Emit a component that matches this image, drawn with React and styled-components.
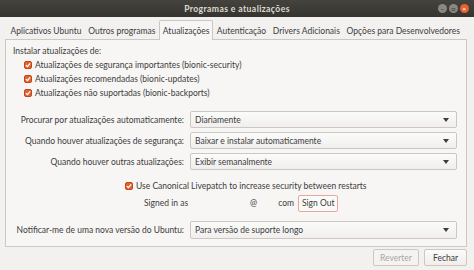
import React from "react";
import styled, { createGlobalStyle } from "styled-components";

const Global = createGlobalStyle`
  html, body { margin: 0; padding: 0; background: #f2f1f0; }
  body { width: 474px; height: 270px; overflow: hidden; }
  * { box-sizing: border-box; }
`;

const Window = styled.div`
  width: 474px;
  height: 270px;
  display: flex;
  flex-direction: column;
  background: #f2f1f0;
  color: #3c3c3c;
  font-family: Lato, "Open Sans", sans-serif;
  font-size: 8.5px;
`;

const TitleBar = styled.div`
  height: 17px;
  flex: none;
  position: relative;
  display: flex;
  align-items: center;
  justify-content: center;
  background: linear-gradient(#45433e, #36342f);
  color: #dfdbd2;
  font-weight: 700;
  font-size: 8.6px;
  letter-spacing: 0.4px;
`;

const WinButtons = styled.div`
  position: absolute;
  right: 5px;
  top: 4px;
  display: flex;
  gap: 2px;
`;

const WinDot = styled.span`
  width: 9px;
  height: 9px;
  border-radius: 50%;
  background: ${(p) => p.$bg};
  display: flex;
  align-items: center;
  justify-content: center;
  color: ${(p) => p.$fg || "#3a3833"};
  font-size: 6px;
  line-height: 1;
`;

const Body = styled.div`
  flex: 1;
  display: flex;
  flex-direction: column;
  padding: 2px 7px 4px 5px;
`;

const TabBar = styled.div`
  display: flex;
  align-items: flex-end;
  height: 20px;
  padding-left: 2px;
`;

const Tab = styled.div`
  height: ${(p) => (p.$active ? "20px" : "18px")};
  padding: 0 ${(p) => p.$pad}px;
  display: flex;
  align-items: center;
  white-space: nowrap;
  border: 1px solid ${(p) => (p.$active ? "#cdc7c2" : "transparent")};
  border-bottom: none;
  background: ${(p) => (p.$active ? "#f7f6f5" : "transparent")};
  border-radius: 2px 2px 0 0;
  margin-bottom: ${(p) => (p.$active ? "-1px" : "0")};
  position: relative;
  z-index: 1;
`;

const Panel = styled.div`
  flex: 1;
  border: 1px solid #cdc7c2;
  background: #f7f6f5;
  padding: 4px 9px 0 7px;
  display: flex;
  flex-direction: column;
`;

const SectionTitle = styled.div`
  height: 13px;
  display: flex;
  align-items: center;
`;

const CheckList = styled.div`
  display: flex;
  flex-direction: column;
  padding-left: 11px;
  margin-top: 1px;
`;

const CheckRow = styled.div`
  height: 14px;
  display: flex;
  align-items: center;
  gap: 3px;
`;

const Box = styled.span`
  width: 8px;
  height: 8px;
  border-radius: 2px;
  background: #e2632f;
  border: 1px solid #c2461b;
  display: inline-flex;
  align-items: center;
  justify-content: center;
  flex: none;
`;

const Grid = styled.div`
  display: grid;
  grid-template-columns: 171px 1fr;
  column-gap: 6px;
  row-gap: 4px;
  align-items: center;
  margin-top: ${(p) => p.$mt}px;
`;

const Label = styled.div`
  text-align: right;
  white-space: nowrap;
`;

const Combo = styled.div`
  height: ${(p) => p.$h || 17}px;
  border: 1px solid #cdc7c2;
  border-radius: 2px;
  background: linear-gradient(#fbfbfa, #f0efee);
  display: flex;
  align-items: center;
  justify-content: space-between;
  padding: 0 7px 0 4px;
`;

const Arrow = styled.span`
  width: 0;
  height: 0;
  border-left: 3px solid transparent;
  border-right: 3px solid transparent;
  border-top: 4px solid #3c3c3c;
`;

const Livepatch = styled.div`
  margin-top: 9px;
  padding-left: 112px;
`;

const SignedRow = styled.div`
  display: flex;
  align-items: center;
  height: 18px;
  margin-top: 1px;
  padding-left: 131px;
`;

const Part = styled.span`
  margin-left: ${(p) => p.$ml || 0}px;
`;

const SignOut = styled.div`
  height: 17px;
  margin-left: 4px;
  padding: 0 3px;
  border: 1px solid #e8a99b;
  border-radius: 2px;
  background: #fbfaf9;
  display: flex;
  align-items: center;
`;

const Footer = styled.div`
  display: flex;
  justify-content: flex-end;
  gap: 5px;
  margin-top: 2px;
`;

const Button = styled.div`
  height: 17px;
  min-width: ${(p) => p.$w}px;
  border: 1px solid #cdc7c2;
  border-radius: 2px;
  background: ${(p) => (p.$disabled ? "#f4f3f2" : "linear-gradient(#fbfbfa, #efeeed)")};
  color: ${(p) => (p.$disabled ? "#a8a7a4" : "#3c3c3c")};
  display: flex;
  align-items: center;
  justify-content: center;
`;

const Check = () => (
  <Box>
    <svg width="6" height="6" viewBox="0 0 6 6">
      <path d="M0.8 3.1 L2.4 4.6 L5.2 1.3" stroke="#fff" strokeWidth="1.3" fill="none" />
    </svg>
  </Box>
);

const tabs = [
  "Aplicativos Ubuntu",
  "Outros programas",
  "Atualizações",
  "Autenticação",
  "Drivers Adicionais",
  "Opções para Desenvolvedores",
];

const combos = [
  ["Procurar por atualizações automaticamente:", "Diariamente"],
  ["Quando houver atualizações de segurança:", "Baixar e instalar automaticamente"],
  ["Quando houver outras atualizações:", "Exibir semanalmente"],
];

export default function App() {
  return (
    <Window>
      <Global />
      <TitleBar>
        Programas e atualizações
        <WinButtons>
          <WinDot $bg="#8a8883">–</WinDot>
          <WinDot $bg="#8a8883">□</WinDot>
          <WinDot $bg="#e9602f" $fg="#fff">×</WinDot>
        </WinButtons>
      </TitleBar>
      <Body>
        <TabBar>
          {tabs.map((t) => {
            const active = t === "Atualizações";
            return (
              <Tab key={t} $active={active} $pad={active ? 3 : 2.4}>{t}</Tab>
            );
          })}
        </TabBar>
        <Panel>
          <SectionTitle>Instalar atualizações de:</SectionTitle>
          <CheckList>
            <CheckRow><Check />Atualizações de segurança importantes (bionic-security)</CheckRow>
            <CheckRow><Check />Atualizações recomendadas (bionic-updates)</CheckRow>
            <CheckRow><Check />Atualizações não suportadas (bionic-backports)</CheckRow>
          </CheckList>
          <Grid $mt={11}>
            {combos.map(([l, v]) => (
              <React.Fragment key={l}>
                <Label>{l}</Label>
                <Combo>{v}<Arrow /></Combo>
              </React.Fragment>
            ))}
          </Grid>
          <Livepatch>
            <CheckRow><Check />Use Canonical Livepatch to increase security between restarts</CheckRow>
          </Livepatch>
          <SignedRow>
            <Part>Signed in as</Part>
            <Part $ml={62}>@</Part>
            <Part $ml={21}>com</Part>
            <SignOut>Sign Out</SignOut>
          </SignedRow>
          <Grid $mt={9}>
            <Label>Notificar-me de uma nova versão do Ubuntu:</Label>
            <Combo $h={18}>Para versão de suporte longo<Arrow /></Combo>
          </Grid>
        </Panel>
        <Footer>
          <Button $w={46} $disabled>Reverter</Button>
          <Button $w={43}>Fechar</Button>
        </Footer>
      </Body>
    </Window>
  );
}
